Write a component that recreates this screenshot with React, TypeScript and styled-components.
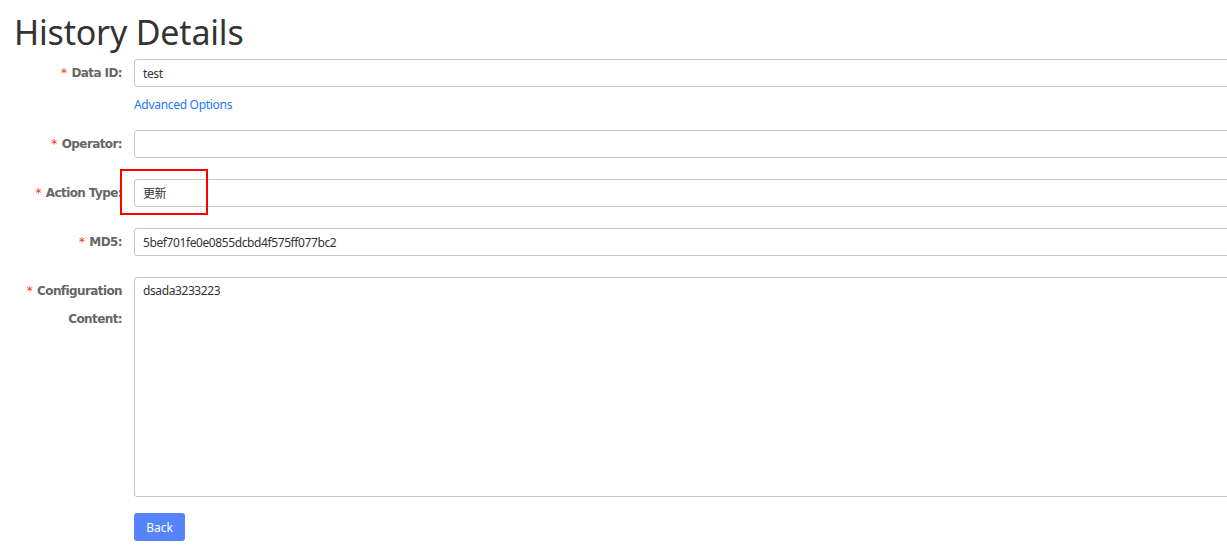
import React from 'react'
import styled, { createGlobalStyle } from 'styled-components'

const GlobalStyle = createGlobalStyle`
  html, body {
    margin: 0;
    padding: 0;
    background: #fff;
    overflow: hidden;
  }
  body {
    font-family: "Noto Sans", "Noto Sans CJK SC", sans-serif;
  }
`

type Field = {
  label: string[]
  value: string
  multiline?: boolean
  helper?: string
  highlight?: boolean
}

const fields: Field[] = [
  { label: ['Data ID:'], value: 'test', helper: 'Advanced Options' },
  { label: ['Operator:'], value: '' },
  { label: ['Action Type:'], value: '更新', highlight: true },
  { label: ['MD5:'], value: '5bef701fe0e0855dcbd4f575ff077bc2' },
  { label: ['Configuration', 'Content:'], value: 'dsada3233223', multiline: true },
]

function App() {
  return (
    <Page>
      <GlobalStyle />
      <Title>History Details</Title>
      <Form>
        {fields.map((f) => (
          <Row key={f.label.join(' ')}>
            <Label>
              {f.label.map((line, i) => (
                <span key={line}>
                  {i === 0 && <Star>*</Star>}
                  {line}
                </span>
              ))}
            </Label>
            <Control>
              <InputBox $multiline={f.multiline}>{f.value}</InputBox>
              {f.highlight && <Marker />}
              {f.helper && <Helper href="#">{f.helper}</Helper>}
            </Control>
          </Row>
        ))}
        <Row>
          <Label />
          <Control>
            <BackButton>Back</BackButton>
          </Control>
        </Row>
      </Form>
    </Page>
  )
}

export default App

const Page = styled.div`
  width: 1227px;
  height: 556px;
  overflow: hidden;
`

const Title = styled.h1`
  margin: 0;
  padding: 12px 0 0 14px;
  height: 59px;
  box-sizing: border-box;
  font-size: 34px;
  font-weight: 400;
  line-height: 40px;
  color: #333;
  letter-spacing: -0.2px;
`

const Form = styled.div`
  display: flex;
  flex-direction: column;
  gap: 21px;
`

const Row = styled.div`
  display: flex;
  align-items: flex-start;
`

const Label = styled.div`
  width: 122px;
  flex: none;
  padding-right: 12px;
  display: flex;
  flex-direction: column;
  align-items: flex-end;
  font-family: "DejaVu Sans", sans-serif;
  font-size: 12px;
  font-weight: 700;
  line-height: 28px;
  color: #666;
  letter-spacing: -0.6px;
`

const Star = styled.span`
  color: #ff3000;
  margin-right: 5px;
  font-weight: 400;
`

const Control = styled.div`
  position: relative;
  display: flex;
  flex-direction: column;
`

const InputBox = styled.div<{ $multiline?: boolean }>`
  box-sizing: border-box;
  width: 1110px;
  height: ${(p) => (p.$multiline ? '220px' : '28px')};
  padding: ${(p) => (p.$multiline ? '5px 8px' : '0 8px')};
  border: 1px solid #c4c6cf;
  border-radius: 3px;
  font-size: 12px;
  line-height: ${(p) => (p.$multiline ? '16px' : '27px')};
  color: #333;
  letter-spacing: -0.4px;
`

const Helper = styled.a`
  margin-top: 9px;
  margin-bottom: -5px;
  font-size: 12px;
  line-height: 18px;
  color: #2077ff;
  text-decoration: none;
  letter-spacing: -0.3px;
  width: fit-content;
`

const Marker = styled.div`
  position: absolute;
  left: -14px;
  top: -10px;
  width: 84px;
  height: 42px;
  border: 2px solid #f00;
  pointer-events: none;
`

const BackButton = styled.button`
  width: 51px;
  height: 28px;
  margin-top: -5px;
  border: none;
  border-radius: 3px;
  background: #5584ff;
  color: #fff;
  font-family: "Noto Sans", sans-serif;
  font-size: 12px;
  padding: 0;
  cursor: pointer;
`
